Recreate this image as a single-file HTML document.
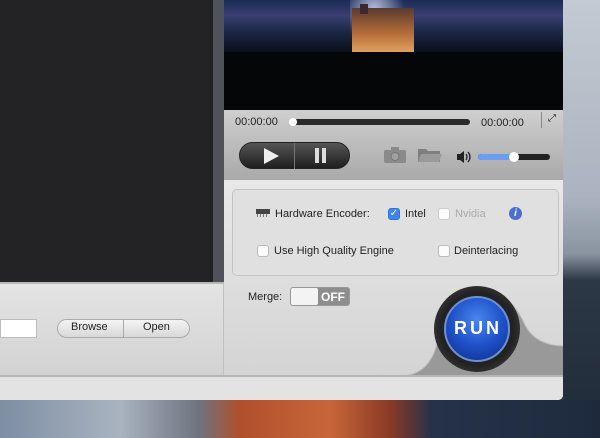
<!DOCTYPE html>
<html><head><meta charset="utf-8"><style>
*{margin:0;padding:0;box-sizing:border-box}
body{width:600px;height:438px;overflow:hidden;position:relative;font-family:"Liberation Sans",sans-serif;background:#2a3545}
.abs{position:absolute}
.desk-r{left:563px;top:0;width:37px;height:438px;background:linear-gradient(180deg,#c3cad3 0%,#aab3bf 45%,#8a93a0 58%,#2d3847 64%,#1f2a38 100%)}
.desk-b{left:0;top:400px;width:600px;height:38px;background:linear-gradient(90deg,#7d8ea3 0%,#a9b3c0 20%,#6f7480 33%,#b0502c 40%,#c8663a 55%,#8a3a26 65%,#26324a 72%,#1e2a3c 100%)}
.win{left:0;top:0;width:563px;height:400px;background:#dcdcdc;overflow:hidden;border-bottom-right-radius:5px}
.t{font-size:11px;color:#222;position:absolute;white-space:nowrap}
.cb{position:absolute;width:12px;height:12px;border:1px solid #bbb;border-radius:3px;background:#fbfbfb}
</style></head><body>
<div class="abs desk-r"></div>
<div class="abs desk-b"></div>
<div class="abs win">
  <div class="abs" style="left:0;top:0;width:213px;height:282px;background:#232326"></div>
  <div class="abs" style="left:213px;top:0;width:11px;height:282px;background:#4f525a"></div>
  <div class="abs" style="left:224px;top:0;width:339px;height:110px;background:#050608"></div>
  <div class="abs" style="left:224px;top:0;width:339px;height:52px;background:linear-gradient(180deg,#1a2c55 0%,#3a3f70 30%,#1c2846 60%,#0a0f1c 100%)"></div>
  <div class="abs" style="left:350px;top:0;width:60px;height:52px;background:radial-gradient(ellipse at 40% 20%,#b8c0e0 0%,rgba(80,90,140,0) 60%)"></div>
  <div class="abs" style="left:352px;top:8px;width:62px;height:44px;background:linear-gradient(180deg,#5a3a30,#b8703a 60%,#e0a060)"></div>
  <div class="abs" style="left:360px;top:4px;width:8px;height:10px;background:#3a2a30"></div>
  <!-- controls -->
  <div class="abs" style="left:224px;top:110px;width:339px;height:70px;background:linear-gradient(180deg,#cfcfcf,#a9a9a9)"></div>
  <div class="t" style="left:235px;top:116px;color:#222">00:00:00</div>
  <div class="abs" style="left:292px;top:119px;width:178px;height:6px;background:#2a2a2a;border-radius:3px"></div>
  <div class="abs" style="left:289px;top:118px;width:8px;height:8px;background:#fff;border-radius:50%"></div>
  <div class="t" style="left:481px;top:117px">00:00:00</div>
  <div class="abs" style="left:541px;top:112px;width:1px;height:16px;background:#888"></div>
  <div class="t" style="left:548px;top:113px;font-size:10px">⤢</div>
  <div class="abs" style="left:239px;top:142px;width:111px;height:27px;border-radius:14px;background:linear-gradient(180deg,#555,#1e1e1e);border:1px solid #222"></div>
  <div class="abs" style="left:294px;top:143px;width:1px;height:26px;background:#777"></div>
  <svg class="abs" style="left:262px;top:147px" width="18" height="18"><path d="M2 1 L17 9 L2 17Z" fill="#eee"/></svg>
  <div class="abs" style="left:315px;top:148px;width:4px;height:15px;background:#ddd"></div>
  <div class="abs" style="left:322px;top:148px;width:4px;height:15px;background:#ddd"></div>
  <svg class="abs" style="left:383px;top:146px" width="24" height="18"><rect x="1" y="4" width="22" height="13" rx="2" fill="#8a8a8a"/><rect x="8" y="1" width="8" height="4" fill="#8a8a8a"/><circle cx="12" cy="10.5" r="4" fill="#a0a0a0" stroke="#777"/></svg>
  <svg class="abs" style="left:417px;top:146px" width="26" height="18"><path d="M1 3h8l2 2h12v11H1Z" fill="#7f7f7f"/><path d="M4 8h21l-3 8H1Z" fill="#9a9a9a"/></svg>
  <svg class="abs" style="left:456px;top:150px" width="16" height="14"><path d="M1 4h3l4-3v12l-4-3H1Z" fill="#222"/><path d="M10 4q2 3 0 6M12 2q4 5 0 10" stroke="#222" fill="none" stroke-width="1.3"/></svg>
  <div class="abs" style="left:478px;top:154px;width:72px;height:6px;background:#222;border-radius:3px"></div>
  <div class="abs" style="left:478px;top:154px;width:36px;height:6px;background:#6b9df0;border-radius:3px"></div>
  <div class="abs" style="left:509px;top:152px;width:10px;height:10px;background:#fff;border-radius:50%"></div>
  <!-- settings -->
  <div class="abs" style="left:224px;top:180px;width:339px;height:196px;background:linear-gradient(180deg,#e8e8e8,#d4d4d4)"></div>
  <div class="abs" style="left:232px;top:189px;width:327px;height:87px;border:1px solid #c4c4c4;border-radius:5px;background:#e0e0e0"></div>
  <div class="abs" style="left:256px;top:209px;width:14px;height:5px;background:#444"></div>
  <div class="abs" style="left:257px;top:214px;width:12px;height:3px;background:repeating-linear-gradient(90deg,#777 0 1px,transparent 1px 3px)"></div>
  <div class="t" style="left:275px;top:208px">Hardware Encoder:</div>
  <div class="cb" style="left:388px;top:208px;background:#3b86f0;border-color:#2f72d0;color:#fff;font-size:10px;line-height:10px;text-align:center">✓</div>
  <div class="t" style="left:405px;top:208px">Intel</div>
  <div class="cb" style="left:438px;top:208px;border-color:#ccc"></div>
  <div class="t" style="left:455px;top:208px;color:#aaa">Nvidia</div>
  <div class="abs" style="left:509px;top:207px;width:13px;height:13px;border-radius:50%;background:#4a6fd0;color:#fff;font-size:10px;font-style:italic;font-weight:bold;text-align:center;line-height:13px">i</div>
  <div class="cb" style="left:257px;top:245px"></div>
  <div class="t" style="left:274px;top:245px">Use High Quality Engine</div>
  <div class="cb" style="left:438px;top:245px"></div>
  <div class="t" style="left:454px;top:245px">Deinterlacing</div>
  <div class="t" style="left:248px;top:291px">Merge:</div>
  <div class="abs" style="left:290px;top:287px;width:60px;height:19px;border:1px solid #999;border-radius:3px;background:#8d8d8d"></div>
  <div class="abs" style="left:291px;top:288px;width:27px;height:17px;background:#f3f3f3;border-radius:2px"></div>
  <div class="t" style="left:321px;top:290px;color:#fff;font-weight:bold;font-size:12px">OFF</div>
  <!-- run base -->
  <svg class="abs" style="left:400px;top:280px" width="163" height="96"><path d="M0 96 Q30 96 38 60 Q50 10 78 8 Q108 8 125 45 Q135 65 163 66 L163 96Z" fill="#999"/><path d="M0 96 Q30 96 38 60 Q50 10 78 8 Q108 8 125 45 Q135 65 163 66" fill="none" stroke="#bbb"/></svg>
  <div class="abs" style="left:434px;top:286px;width:86px;height:86px;border-radius:50%;background:radial-gradient(circle,#222 60%,#555 100%)"></div>
  <div class="abs" style="left:444px;top:296px;width:66px;height:66px;border-radius:50%;background:radial-gradient(circle at 50% 35%,#4b86f0 0%,#1f52c8 50%,#0b2a8a 100%);border:2px solid #6f8fd0"></div>
  <div class="t" style="left:454px;top:318px;color:#fff;font-weight:bold;font-size:18px;letter-spacing:3px">RUN</div>
  <!-- left lower -->
  <div class="abs" style="left:0;top:282px;width:224px;height:94px;background:linear-gradient(180deg,#e4e4e4,#d2d2d2);border-top:2px solid #b8b8b8;border-right:1px solid #c0c0c0"></div>
  <div class="abs" style="left:0;top:319px;width:37px;height:19px;background:#fff;border:1px solid #bbb"></div>
  <div class="abs" style="left:57px;top:319px;width:133px;height:19px;border:1px solid #aaa;border-radius:10px;background:linear-gradient(180deg,#f4f4f4,#d8d8d8)"></div>
  <div class="abs" style="left:123px;top:320px;width:1px;height:17px;background:#aaa"></div>
  <div class="t" style="left:71px;top:321px">Browse</div>
  <div class="t" style="left:143px;top:321px">Open</div>
  <div class="abs" style="left:0;top:375px;width:563px;height:2px;background:#b5b5b5"></div>
  <div class="abs" style="left:0;top:377px;width:563px;height:23px;background:#e3e3e3"></div>
</div>
</body></html>
